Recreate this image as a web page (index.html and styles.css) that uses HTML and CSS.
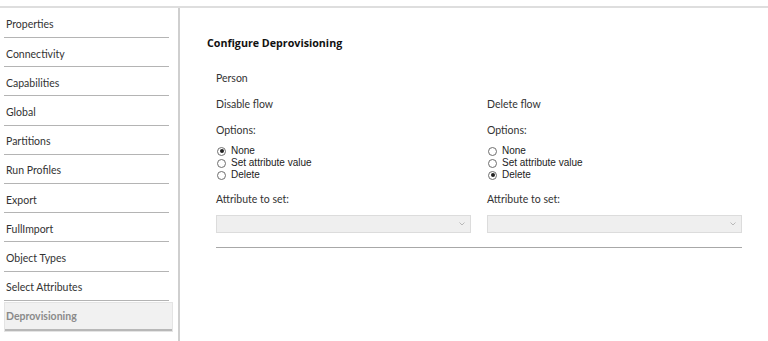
FILE: index.html
```html
<!DOCTYPE html>
<html>
<head>
<meta charset="utf-8">
<link rel="stylesheet" href="styles.css">
</head>
<body>
<div class="topbar"></div>
<div class="layout">
  <nav class="sidebar">
    <div class="item">Properties</div>
    <div class="item">Connectivity</div>
    <div class="item">Capabilities</div>
    <div class="item">Global</div>
    <div class="item">Partitions</div>
    <div class="item">Run Profiles</div>
    <div class="item">Export</div>
    <div class="item">FullImport</div>
    <div class="item">Object Types</div>
    <div class="item">Select Attributes</div>
    <div class="item selected">Deprovisioning</div>
  </nav>
  <main class="content">
    <h1 class="title">Configure Deprovisioning</h1>
    <div class="body">
      <div class="label person">Person</div>
      <div class="columns">
        <div class="col">
          <div class="label flow">Disable flow</div>
          <div class="label opts">Options:</div>
          <div class="radios">
            <div class="radio"><span class="dot checked"></span>None</div>
            <div class="radio"><span class="dot"></span>Set attribute value</div>
            <div class="radio"><span class="dot"></span>Delete</div>
          </div>
          <div class="label attr">Attribute to set:</div>
          <div class="select"><svg class="chev" width="6" height="4" viewBox="0 0 6 4"><path d="M0.5 0.5 L3 3 L5.5 0.5" fill="none" stroke="#b8b8b8" stroke-width="1"/></svg></div>
        </div>
        <div class="col">
          <div class="label flow">Delete flow</div>
          <div class="label opts">Options:</div>
          <div class="radios">
            <div class="radio"><span class="dot"></span>None</div>
            <div class="radio"><span class="dot"></span>Set attribute value</div>
            <div class="radio"><span class="dot checked"></span>Delete</div>
          </div>
          <div class="label attr">Attribute to set:</div>
          <div class="select"><svg class="chev" width="6" height="4" viewBox="0 0 6 4"><path d="M0.5 0.5 L3 3 L5.5 0.5" fill="none" stroke="#b8b8b8" stroke-width="1"/></svg></div>
        </div>
      </div>
      <div class="rule"></div>
    </div>
  </main>
</div>
</body>
</html>
```
FILE: styles.css
```css
html, body {
  margin: 0;
  padding: 0;
  background: #fff;
  font-family: Lato, "Open Sans", sans-serif;
  font-size: 10.5px;
  color: #333;
}
.topbar {
  height: 6px;
  border-bottom: 2px solid #dedede;
}
.layout {
  display: flex;
  height: 333px;
}
.sidebar {
  flex: none;
  border-right: 2px solid #cfcfcf;
  padding: 0 9px 0 4px;
  box-sizing: border-box;
  width: 180px;
}
.item {
  height: 29.2px;
  box-sizing: border-box;
  border-bottom: 1px solid #b4b4b4;
  display: flex;
  align-items: center;
  padding: 3px 0 0 2px;
  color: #333;
}
.item:first-child {
  height: 30px;
}
.item.selected {
  margin-right: -4px;
  height: 30px;
  margin-top: 1px;
  background: #f1f1f1;
  border: 1px solid #e4e4e4;
  box-shadow: inset 0 -3px 0 -1px #b8b8b8;
  font-weight: bold;
  color: #8a8a8a;
  padding: 0 0 1px 1px;
}
.content {
  flex: 1;
  padding-left: 27px;
}
.title {
  margin: 27px 0 0 0;
  font-family: "Open Sans", sans-serif;
  font-size: 10.7px;
  line-height: 16px;
  font-weight: bold;
  color: #111;
}
.body {
  padding-left: 9px;
  width: 526px;
}
.label {
  line-height: 16px;
  color: #333;
}
.person {
  margin-top: 19px;
}
.columns {
  display: grid;
  grid-template-columns: 255px 255px;
  column-gap: 16px;
}
.flow {
  margin-top: 10px;
}
.opts {
  margin-top: 10px;
}
.radios {
  margin-top: 7px;
}
.radio {
  display: flex;
  align-items: center;
  height: 12px;
  line-height: 12px;
  color: #222;
  font-family: "Liberation Sans", Arial, sans-serif;
  font-size: 10px;
}
.dot {
  width: 9px;
  height: 9px;
  box-sizing: border-box;
  border: 1px solid #6e6e6e;
  border-radius: 50%;
  margin-right: 5px;
  margin-left: 1px;
  display: flex;
  align-items: center;
  justify-content: center;
}
.dot.checked::after {
  content: "";
  width: 4px;
  height: 4px;
  border-radius: 50%;
  background: #222;
}
.attr {
  margin-top: 10px;
}
.select {
  margin-top: 8px;
  height: 18px;
  box-sizing: border-box;
  border: 1px solid #dcdcdc;
  background: #efefef;
  display: flex;
  align-items: center;
  justify-content: flex-end;
  padding-right: 5px;
}
.rule {
  margin-top: 14px;
  height: 1px;
  background: #a8a8a8;
}
```
